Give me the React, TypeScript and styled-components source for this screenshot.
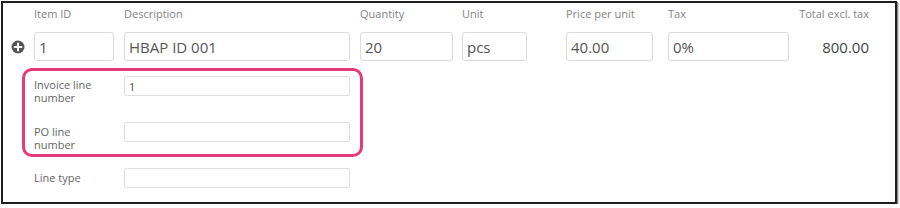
import React from "react";
import styled, { createGlobalStyle } from "styled-components";

const Global = createGlobalStyle`
  html, body { margin: 0; padding: 0; background: #fff; }
  body { font-family: "Open Sans", "DejaVu Sans", sans-serif; }
  * { box-sizing: border-box; }
`;

const Frame = styled.div`
  margin: 1px 0 0 1px;
  width: 896px;
  height: 203px;
  border: 2px solid #1e1e1e;
  box-shadow: 1px 1px 0 #8a8a8a, 2px 2px 0 #d0d0d0;
  background: #fff;
  padding-top: 4px;
`;

const LineGrid = styled.div`
  display: grid;
  grid-template-columns: 31px 90px 236px 102px 104px 102px 129px 72px;
  align-items: center;
`;

const HeaderRow = styled(LineGrid)`
  height: 14px;
`;

const InputRow = styled(LineGrid)`
  margin-top: 11px;
`;

const HeadLabel = styled.div<{ $right?: boolean }>`
  font-size: 11px;
  line-height: 14px;
  color: #838383;
  white-space: nowrap;
  text-align: ${(p) => (p.$right ? "right" : "left")};
`;

const IconCell = styled.div`
  display: flex;
  align-items: center;
  padding-left: 8px;
`;

const Field = styled.div<{ $w: number }>`
  width: ${(p) => p.$w}px;
  height: 29px;
  border: 1px solid #dcdcdc;
  border-radius: 3px;
  padding: 0 4px;
  display: flex;
  align-items: center;
  font-size: 15px;
  color: #555;
  background: #fff;
`;

const Amount = styled.div`
  font-size: 15px;
  color: #444;
  text-align: right;
`;

const Highlight = styled.div`
  margin: 7px 0 0 19px;
  width: 341px;
  height: 89px;
  border: 3px solid #e63a78;
  border-radius: 10px;
  padding: 5px 10px 0 9px;
`;

const SubRow = styled.div<{ $h: number }>`
  display: grid;
  grid-template-columns: 90px 226px;
  align-items: start;
  height: ${(p) => p.$h}px;
`;

const SubLabel = styled.div<{ $top: number }>`
  font-size: 11px;
  line-height: 13px;
  color: #666;
  padding-top: ${(p) => p.$top}px;
`;

const SubField = styled.div`
  height: 20px;
  border: 1px solid #e0e0e0;
  border-radius: 2px;
  padding: 0 4px;
  display: flex;
  align-items: center;
  font-size: 11px;
  color: #444;
`;

const Outside = styled.div`
  margin: 11px 0 0 31px;
`;

const PlusIcon = () => (
  <svg width="14" height="14" viewBox="0 0 14 14">
    <circle cx="7" cy="7" r="6.5" fill="#555" />
    <path d="M7 3.6v6.8M3.6 7h6.8" stroke="#fff" strokeWidth="2" strokeLinecap="round" />
  </svg>
);

export default function App() {
  return (
    <>
      <Global />
      <Frame>
        <HeaderRow>
          <div />
          <HeadLabel>Item ID</HeadLabel>
          <HeadLabel>Description</HeadLabel>
          <HeadLabel>Quantity</HeadLabel>
          <HeadLabel>Unit</HeadLabel>
          <HeadLabel>Price per unit</HeadLabel>
          <HeadLabel>Tax</HeadLabel>
          <HeadLabel $right>Total excl. tax</HeadLabel>
        </HeaderRow>
        <InputRow>
          <IconCell>
            <PlusIcon />
          </IconCell>
          <Field $w={80}>1</Field>
          <Field $w={226}>HBAP ID 001</Field>
          <Field $w={93}>20</Field>
          <Field $w={65}>pcs</Field>
          <Field $w={87}>40.00</Field>
          <Field $w={121}>0%</Field>
          <Amount>800.00</Amount>
        </InputRow>
        <Highlight>
          <SubRow $h={46}>
            <SubLabel $top={2}>
              Invoice line
              <br />
              number
            </SubLabel>
            <SubField>1</SubField>
          </SubRow>
          <SubRow $h={32}>
            <SubLabel $top={3}>
              PO line
              <br />
              number
            </SubLabel>
            <SubField />
          </SubRow>
        </Highlight>
        <Outside>
          <SubRow $h={20}>
            <SubLabel $top={3}>Line type</SubLabel>
            <SubField />
          </SubRow>
        </Outside>
      </Frame>
    </>
  );
}
